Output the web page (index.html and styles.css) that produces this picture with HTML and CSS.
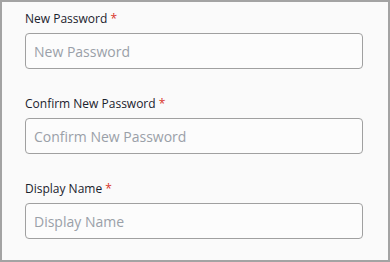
FILE: index.html
```html
<!DOCTYPE html>
<html lang="en">
<head>
    <meta charset="UTF-8">
    <meta name="viewport" content="width=device-width, initial-scale=1.0">
    <title>Account Settings</title>
    <link rel="stylesheet" href="styles.css">
</head>
<body>

    <div class="panel">
        <form id="accountForm">
            <div class="field">
                <label for="newPassword">New Password <span class="req">*</span></label>
                <input type="password" id="newPassword" name="newPassword" placeholder="New Password" required>
            </div>

            <div class="field">
                <label for="confirmPassword">Confirm New Password <span class="req">*</span></label>
                <input type="password" id="confirmPassword" name="confirmPassword" placeholder="Confirm New Password" required>
            </div>

            <div class="field">
                <label for="displayName">Display Name <span class="req">*</span></label>
                <input type="text" id="displayName" name="displayName" placeholder="Display Name" required>
            </div>
        </form>
    </div>

</body>
</html>
```

FILE: styles.css
```css
* {
    box-sizing: border-box;
}
body {
    margin: 0;
    font-family: "Open Sans", "Noto Sans", Arial, sans-serif;
}
.panel {
    width: 390px;
    height: 262px;
    padding: 8px 25px 0 23px;
    background-color: #fafafa;
    border: 2px solid #a3a3a3;
    overflow: hidden;
}
.field {
    margin-bottom: 26px;
}
label {
    display: block;
    font-size: 12px;
    font-weight: 500;
    line-height: 18px;
    color: #1a222d;
    margin-bottom: 5px;
}
.req {
    color: #d9342b;
}
input {
    display: block;
    width: 100%;
    height: 36px;
    padding: 0 8px;
    border: 1px solid #a0a0a0;
    border-radius: 4px;
    background-color: #fcfcfc;
    font-family: inherit;
    font-size: 14px;
    color: #1f2733;
}
input::placeholder {
    color: #9aa0a8;
}
```
